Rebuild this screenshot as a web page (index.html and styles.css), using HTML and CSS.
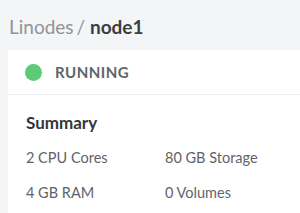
FILE: index.html
```html
<!DOCTYPE html>
<html lang="en">
<head>
    <meta charset="UTF-8">
    <meta name="viewport" content="width=device-width, initial-scale=1.0">
    <title>node1</title>
    <link rel="stylesheet" href="styles.css">
</head>
<body>
    <div class="breadcrumb">
        <span class="crumb-parent">Linodes</span>
        <span class="crumb-sep">/</span>
        <span class="crumb-current">node1</span>
    </div>

    <div class="card">
        <div class="card-header">
            <span class="status-dot"></span>
            <span class="status-text">RUNNING</span>
        </div>

        <div class="summary">
            <h2>Summary</h2>
            <div class="summary-grid">
                <div class="summary-item">2 CPU Cores</div>
                <div class="summary-item">80 GB Storage</div>
                <div class="summary-item">4 GB RAM</div>
                <div class="summary-item">0 Volumes</div>
            </div>
        </div>
    </div>
</body>
</html>
```

FILE: styles.css
```css
body {
    font-family: Lato, "Liberation Sans", sans-serif;
    margin: 0;
    background-color: #f4f5f6;
    overflow: hidden;
}

.breadcrumb {
    padding: 15px 0 0 9px;
    height: 50px;
    box-sizing: border-box;
    font-size: 19px;
    line-height: 24px;
}

.crumb-parent {
    color: #909398;
}

.crumb-sep {
    color: #909398;
    margin-left: -2px;
}

.crumb-current {
    color: #3a3e44;
    font-weight: bold;
}

.card {
    margin-left: 8px;
    background-color: #fff;
    height: 170px;
}

.card-header {
    display: flex;
    align-items: center;
    gap: 13px;
    height: 44px;
    padding-left: 17px;
    border-bottom: 1px solid #eef0f2;
}

.status-dot {
    width: 17px;
    height: 17px;
    border-radius: 50%;
    background-color: #5dca78;
}

.status-text {
    font-size: 15px;
    font-weight: bold;
    color: #606469;
    letter-spacing: 0.5px;
}

.summary {
    padding: 17px 0 0 18px;
}

.summary h2 {
    margin: 0;
    font-size: 17px;
    line-height: 22px;
    color: #32363c;
}

.summary-grid {
    display: grid;
    grid-template-columns: 139px 1fr;
    row-gap: 17px;
    margin-top: 15px;
}

.summary-item {
    font-size: 14.5px;
    line-height: 18px;
    color: #606469;
}
```
